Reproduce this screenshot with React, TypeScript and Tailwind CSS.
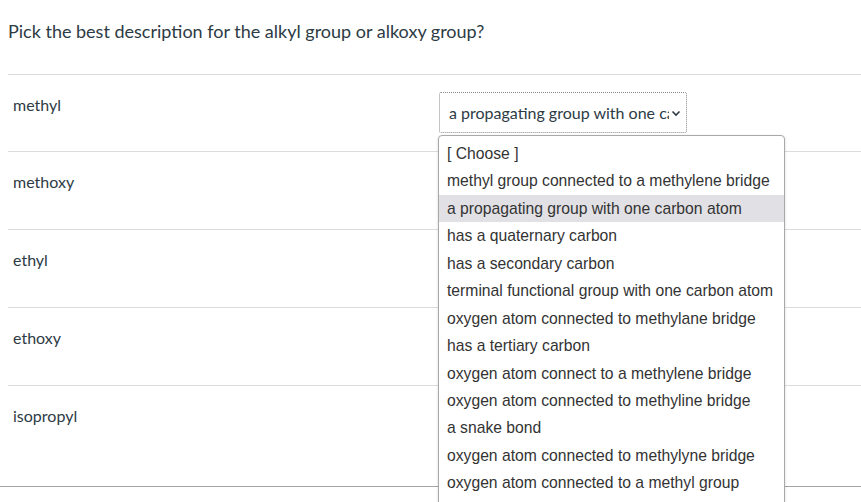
import React from "react";

const options = [
  "[ Choose ]",
  "methyl group connected to a methylene bridge",
  "a propagating group with one carbon atom",
  "has a quaternary carbon",
  "has a secondary carbon",
  "terminal functional group with one carbon atom",
  "oxygen atom connected to methylane bridge",
  "has a tertiary carbon",
  "oxygen atom connect to a methylene bridge",
  "oxygen atom connected to methyline bridge",
  "a snake bond",
  "oxygen atom connected to methylyne bridge",
  "oxygen atom connected to a methyl group",
];

const rows = ["methyl", "methoxy", "ethyl", "ethoxy", "isopropyl"];

export default function App() {
  return (
    <div
      className="relative w-[861px] h-[502px] overflow-hidden bg-white text-[#2d3b45]"
      style={{ fontFamily: "Lato, 'Liberation Sans', sans-serif" }}
    >
      <div className="pl-2">
        <div className="pt-[18px] h-[74px] text-[18px] leading-[26px]">
          Pick the best description for the alkyl group or alkoxy group?
        </div>
        {rows.map((r, i) => (
          <div
            key={r}
            className={`flex border-t border-[#d8dcdf] ${i === 4 ? "h-[101px]" : i === 0 ? "h-[77px]" : "h-[78px]"}`}
          >
            <div className="w-[431px] pl-[5px] pt-[20px] text-[16px] leading-[20px]">{r}</div>
            {i === 0 && (
              <div className="relative pt-[17px]">
                <div className="flex items-center w-[248px] h-[41px] border border-dotted border-[#8a8a8a] rounded-[2px] pl-[9px] pr-[5px] text-[16px]">
                  <span className="flex-1 overflow-hidden whitespace-nowrap">
                    a propagating group with one carbon atom
                  </span>
                  <svg width="10" height="8" viewBox="0 0 10 8" className="ml-[2px]">
                    <path d="M1.5 2.5 L5 6 L8.5 2.5" fill="none" stroke="#2d3b45" strokeWidth="1.6" />
                  </svg>
                </div>
                <div
                  className="absolute left-[-1px] top-[60px] w-[347px] bg-white border border-[#a9a9a9] rounded-[4px] shadow-[0_1px_3px_rgba(0,0,0,0.15)] pt-[4px] pb-[8px] z-10"
                  style={{ fontFamily: "'Liberation Sans', Arial, sans-serif" }}
                >
                  {options.map((o, j) => (
                    <div
                      key={o}
                      className={`h-[27.45px] leading-[27.45px] pl-2 text-[15.7px] text-[#333333] whitespace-nowrap ${j === 2 ? "bg-[#e1e0e5]" : ""}`}
                    >
                      {o}
                    </div>
                  ))}
                </div>
              </div>
            )}
          </div>
        ))}
      </div>
      <div className="border-t border-[#a3a3a3]" />
    </div>
  );
}
